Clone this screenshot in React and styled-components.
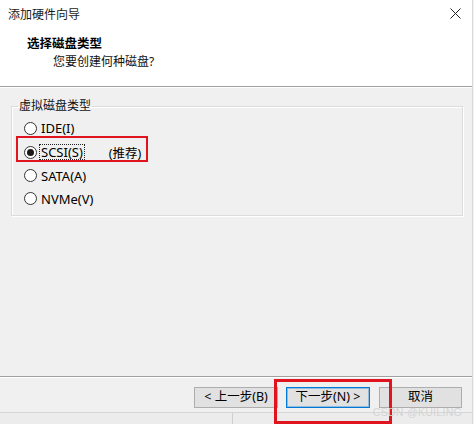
import React from "react";
import styled, { createGlobalStyle } from "styled-components";

const Global = createGlobalStyle`
  html, body { margin: 0; padding: 0; }
  body {
    width: 474px;
    height: 424px;
    overflow: hidden;
    background: #f0f0f0;
    font-family: "Noto Sans", "Noto Sans CJK SC", sans-serif;
    color: #000;
  }
`;

const Window = styled.div`
  position: relative;
  width: 472px;
  height: 424px;
  display: flex;
  flex-direction: column;
  border-right: 1px solid #dadada;
  background: #f0f0f0;
`;

const Top = styled.div`
  background: #fff;
  border-bottom: 1px solid #a0a0a0;
  display: flex;
  flex-direction: column;
  height: 86px;
`;

const TitleBar = styled.div`
  height: 28px;
  display: flex;
  align-items: center;
  justify-content: space-between;
  padding: 0 11px 0 8px;
  font-size: 12px;
  color: #1a1a1a;
`;

const CloseIcon = styled.svg`
  width: 11px;
  height: 11px;
  display: block;
  margin-bottom: 1px;
`;

const Header = styled.div`
  padding: 7px 0 0 27px;
  display: flex;
  flex-direction: column;
  gap: 3px;
`;

const HeaderTitle = styled.div`
  font-family: "Noto Sans CJK SC", sans-serif;
  font-weight: 700;
  font-size: 12.5px;
  line-height: 16px;
`;

const HeaderSub = styled.div`
  font-size: 12px;
  line-height: 16px;
  padding-left: 26px;
  color: #111;
`;

const Body = styled.div`
  flex: 1;
  padding: 10px 9px 0 11px;
  border-top: 1px solid #fff;
`;

const Group = styled.fieldset`
  margin: 0;
  padding: 2px 0 5px 6px;
  border: 1px solid #dcdcdc;
  box-shadow: inset 1px 1px 0 #fff, 1px 1px 0 #fff;
  min-width: 0;
`;

const Legend = styled.legend`
  padding: 0 1px;
  font-size: 12px;
  line-height: 16px;
  color: #111;
`;

const OptionRow = styled.label`
  display: flex;
  align-items: center;
  height: ${(p) => p.$h || 24}px;
  padding-left: 6px;
  font-size: 13px;
  gap: 3px;
`;

const Radio = styled.span`
  width: 11px;
  height: 11px;
  border-radius: 50%;
  border: 1px solid #333;
  background: #fff;
  display: flex;
  align-items: center;
  justify-content: center;
  flex-shrink: 0;
  &::after {
    content: "";
    width: 7px;
    height: 7px;
    border-radius: 50%;
    background: ${(p) => (p.$checked ? "#1a1a1a" : "transparent")};
  }
`;

const OptionText = styled.span`
  padding: 0 1px;
  line-height: 14px;
  outline: ${(p) => (p.$focus ? "1px dotted #222" : "none")};
`;

const Recommend = styled.span`
  margin-left: 22px;
  font-size: 12.5px;
`;

const Footer = styled.div`
  border-top: 1px solid #a0a0a0;
  box-shadow: inset 0 1px 0 #fff;
  display: flex;
  flex-direction: column;
`;

const ButtonRow = styled.div`
  display: flex;
  justify-content: flex-end;
  gap: 8px;
  padding: 10px 10px 4px 0;
`;

const Button = styled.button`
  width: ${(p) => p.$w || 84}px;
  height: 21px;
  padding: 0;
  margin-left: ${(p) => p.$ml || 0}px;
  font-family: "Noto Sans", "Noto Sans CJK SC", sans-serif;
  font-size: 12.5px;
  color: #000;
  background: #e1e1e1;
  border: 1px solid ${(p) => (p.$default ? "#0078d7" : "#adadad")};
  box-shadow: ${(p) => (p.$default ? "inset 0 0 0 1px rgba(0,120,215,0.35)" : "none")};
  display: flex;
  align-items: center;
  justify-content: center;
  line-height: 1;
`;

const BottomStrip = styled.div`
  height: 11px;
  border-top: 1px solid #d6d6d6;
  background: #ececec;
  display: flex;
`;

const StripCell = styled.div`
  width: ${(p) => p.$w}px;
  border-right: 1px solid #cfcfcf;
`;

const Annotation = styled.div`
  position: absolute;
  left: ${(p) => p.$x}px;
  top: ${(p) => p.$y}px;
  width: ${(p) => p.$w}px;
  height: ${(p) => p.$h}px;
  border: ${(p) => p.$t}px solid #e0141e;
  box-sizing: border-box;
  pointer-events: none;
`;

const Watermark = styled.div`
  position: absolute;
  right: 10px;
  top: 406px;
  font-family: "Liberation Sans", Arial, sans-serif;
  font-size: 10.5px;
  line-height: 12px;
  letter-spacing: 0.3px;
  color: #d4d4d4;
  pointer-events: none;
  white-space: nowrap;
`;

const options = [
  { label: "IDE(I)", h: 24 },
  { label: "SCSI(S)", checked: true, recommend: "(推荐)", h: 24 },
  { label: "SATA(A)", h: 23 },
  { label: "NVMe(V)", h: 23 },
];

export default function App() {
  return (
    <>
      <Global />
      <Window>
        <Top>
          <TitleBar>
            <span>添加硬件向导</span>
            <CloseIcon viewBox="0 0 11 11">
              <path d="M0.5 0.5 L10.5 10.5 M10.5 0.5 L0.5 10.5" stroke="#222" strokeWidth="1" fill="none" />
            </CloseIcon>
          </TitleBar>
          <Header>
            <HeaderTitle>选择磁盘类型</HeaderTitle>
            <HeaderSub>您要创建何种磁盘?</HeaderSub>
          </Header>
        </Top>
        <Body>
          <Group>
            <Legend>虚拟磁盘类型</Legend>
            {options.map((o) => (
              <OptionRow key={o.label} $h={o.h}>
                <Radio $checked={o.checked} />
                <OptionText $focus={o.checked}>{o.label}</OptionText>
                {o.recommend && <Recommend>{o.recommend}</Recommend>}
              </OptionRow>
            ))}
          </Group>
        </Body>
        <Footer>
          <ButtonRow>
            <Button>&lt; 上一步(B)</Button>
            <Button $default>下一步(N) &gt;</Button>
            <Button $ml={1} $w={83}>取消</Button>
          </ButtonRow>
          <BottomStrip>
            <StripCell $w={232} />
          </BottomStrip>
        </Footer>
        <Annotation $x={16} $y={136} $w={132} $h={26} $t={2} />
        <Annotation $x={274} $y={379} $w={118} $h={45} $t={3} />
        <Watermark>CSDN @KUILING</Watermark>
      </Window>
    </>
  );
}
